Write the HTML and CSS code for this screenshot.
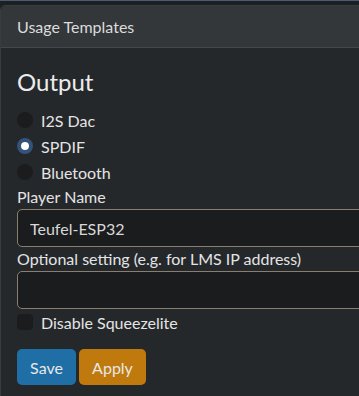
FILE: index.html
```html
<!DOCTYPE html>
<html lang="en">
<head>
  <meta charset="UTF-8" />
  <meta name="viewport" content="width=device-width, initial-scale=1.0"/>
  <title>Usage Templates</title>
  <link rel="stylesheet" href="styles.css">
</head>
<body>
  <div class="card">
    <div class="card-header">Usage Templates</div>
    <div class="card-body">
      <h4 class="section-title">Output</h4>

      <label class="choice">
        <input type="radio" name="output" value="i2s">
        <span class="radio"></span>
        I2S Dac
      </label>
      <label class="choice">
        <input type="radio" name="output" value="spdif" checked>
        <span class="radio"></span>
        SPDIF
      </label>
      <label class="choice">
        <input type="radio" name="output" value="bt">
        <span class="radio"></span>
        Bluetooth
      </label>

      <div class="field">
        <label class="field-label" for="player-name">Player Name</label>
        <input id="player-name" class="text-input" type="text" value="Teufel-ESP32">
      </div>
      <div class="field">
        <label class="field-label" for="optional">Optional setting (e.g. for LMS IP address)</label>
        <input id="optional" class="text-input" type="text" value="">
      </div>

      <label class="choice">
        <input type="checkbox">
        <span class="box"></span>
        Disable Squeezelite
      </label>

      <div class="actions">
        <button class="btn btn-save">Save</button>
        <button class="btn btn-apply">Apply</button>
      </div>
    </div>
  </div>
</body>
</html>
```

FILE: styles.css
```css
html, body {
  margin: 0;
  padding: 0;
  overflow: hidden;
}
body {
  font-family: Lato, "Open Sans", sans-serif;
  background-color: #1e1f21;
  border-top: 1px solid #4a5a7b;
  color: #e4e4e4;
  height: 395px;
}
.card {
  margin-top: 4px;
  width: 420px;
  background-color: #25282b;
  border: 1px solid #393c3f;
  border-radius: 5px;
  height: 440px;
}
.card-header {
  background-color: #33373a;
  border-bottom: 1px solid #44484b;
  border-radius: 5px 5px 0 0;
  padding: 0 16px;
  height: 41px;
  line-height: 41px;
  font-size: 16px;
  color: #dcdcdc;
}
.card-body {
  padding: 0 16px;
}
.section-title {
  margin: 0;
  padding-top: 19px;
  height: 40px;
  line-height: 30px;
  font-size: 24px;
  font-weight: normal;
  color: #ececec;
}
.choice {
  display: flex;
  align-items: center;
  height: 26px;
  font-size: 16px;
  color: #e4e4e4;
  cursor: pointer;
}
.choice input {
  display: none;
}
.radio, .box {
  width: 16px;
  height: 16px;
  margin-right: 8px;
  background-color: #1b1c1e;
  box-sizing: border-box;
}
.radio {
  border-radius: 50%;
}
.box {
  border-radius: 4px;
}
.choice input:checked + .radio {
  border: 4px solid #33527c;
}
.choice input:checked + .radio::after {
  content: "";
  display: block;
  width: 8px;
  height: 8px;
  border-radius: 50%;
  background: #ffffff;
}
.field {
  display: flex;
  flex-direction: column;
}
.field-label {
  font-size: 16px;
  height: 24px;
  line-height: 24px;
  color: #e4e4e4;
}
.text-input {
  height: 38px;
  box-sizing: border-box;
  background-color: #1b1c1e;
  border: 1px solid #8a7f6f;
  border-radius: 5px;
  padding: 0 12px;
  font-family: inherit;
  font-size: 16px;
  color: #d8d8d8;
}
.actions {
  display: flex;
  gap: 3px;
  margin-top: 14px;
}
.btn {
  height: 36px;
  border: none;
  border-radius: 5px;
  font-family: inherit;
  font-size: 16px;
  color: #e8e8e8;
  padding: 0;
  cursor: pointer;
}
.btn-save {
  background-color: #1f6ea6;
  width: 59px;
}
.btn-apply {
  background-color: #c0790c;
  width: 67px;
}
```
